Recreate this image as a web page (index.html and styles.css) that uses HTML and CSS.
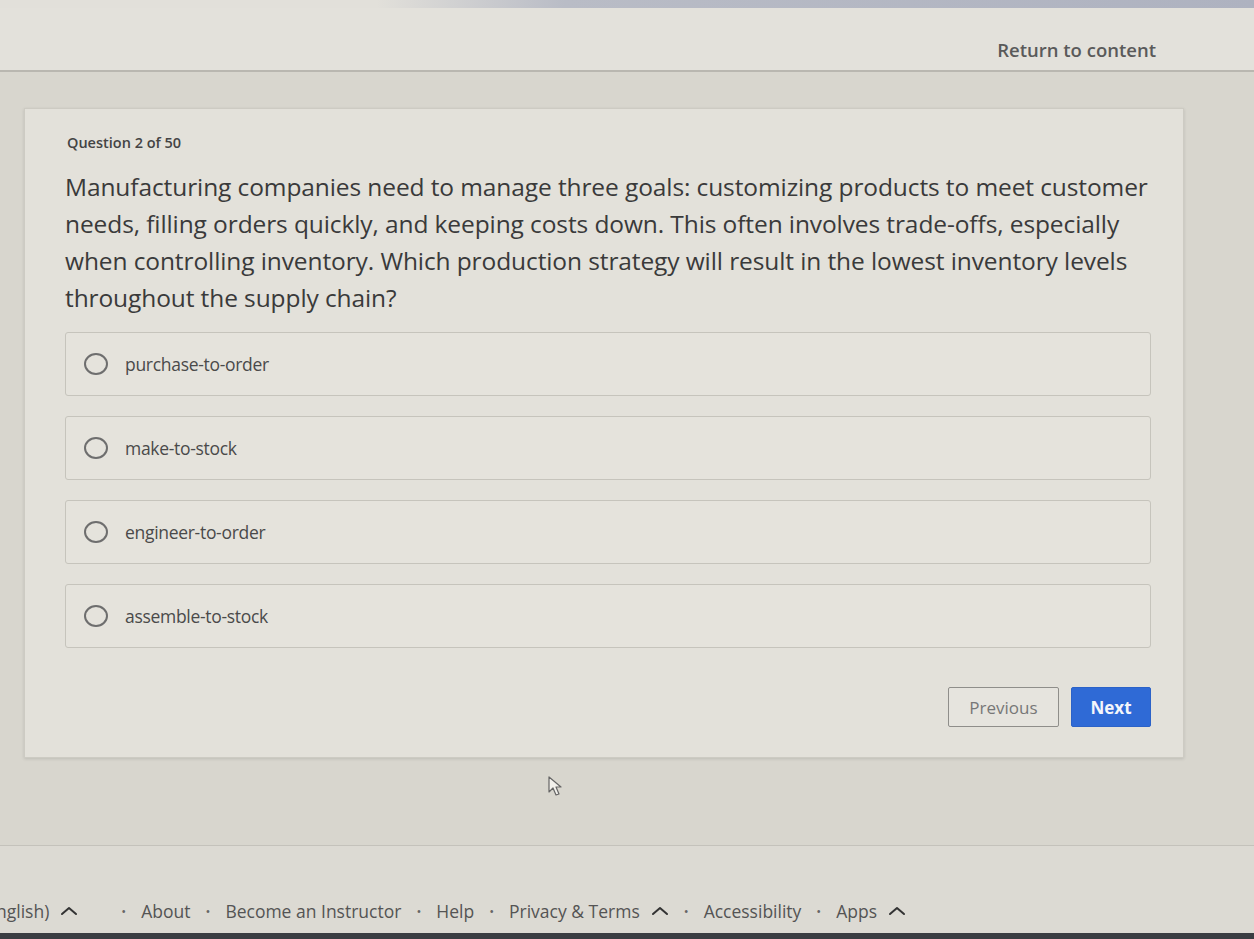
FILE: index.html
```html
<!DOCTYPE html>
<html lang="en">
<head>
<meta charset="utf-8">
<title>Question 2 of 50</title>
<link rel="stylesheet" href="styles.css">
</head>
<body>
<div class="topband"></div>
<header class="header">
  <a class="return" href="#">Return to content</a>
</header>
<main class="main">
  <section class="card">
    <div class="qnum">Question 2 of 50</div>
    <p class="qtext">Manufacturing companies need to manage three goals: customizing products to meet customer needs, filling orders quickly, and keeping costs down. This often involves trade-offs, especially when controlling inventory. Which production strategy will result in the lowest inventory levels throughout the supply chain?</p>
    <div class="options">
      <label class="option"><span class="radio"></span><span class="otext">purchase-to-order</span></label>
      <label class="option"><span class="radio"></span><span class="otext">make-to-stock</span></label>
      <label class="option"><span class="radio"></span><span class="otext">engineer-to-order</span></label>
      <label class="option"><span class="radio"></span><span class="otext">assemble-to-stock</span></label>
    </div>
    <div class="actions">
      <button class="btn prev">Previous</button>
      <button class="btn next">Next</button>
    </div>
  </section>
  <svg class="cursor" width="16" height="22" viewBox="0 0 16 22"><path d="M1 1 L1 16 L5 12 L8 19 L11 18 L8 11 L13 11 Z" fill="#f2f1ec" stroke="#666" stroke-width="1.2" stroke-linejoin="round"/></svg>
</main>
<footer class="footer">
  <span class="fitem first">nglish)<svg class="caret" width="18" height="10" viewBox="0 0 18 10"><path d="M2 8 L9 2 L16 8" fill="none" stroke="#333" stroke-width="2" stroke-linecap="round" stroke-linejoin="round"/></svg></span>
  <span class="dot">&bull;</span><span class="fitem">About</span>
  <span class="dot">&bull;</span><span class="fitem">Become an Instructor</span>
  <span class="dot">&bull;</span><span class="fitem">Help</span>
  <span class="dot">&bull;</span><span class="fitem">Privacy &amp; Terms<svg class="caret" width="18" height="10" viewBox="0 0 18 10"><path d="M2 8 L9 2 L16 8" fill="none" stroke="#333" stroke-width="2" stroke-linecap="round" stroke-linejoin="round"/></svg></span>
  <span class="dot">&bull;</span><span class="fitem">Accessibility</span>
  <span class="dot">&bull;</span><span class="fitem">Apps<svg class="caret" width="18" height="10" viewBox="0 0 18 10"><path d="M2 8 L9 2 L16 8" fill="none" stroke="#333" stroke-width="2" stroke-linecap="round" stroke-linejoin="round"/></svg></span>
</footer>
<div class="taskbar"></div>
</body>
</html>
```
FILE: styles.css
```css
* { box-sizing: border-box; }
html, body { margin: 0; padding: 0; }
body {
  width: 1254px;
  height: 939px;
  overflow: hidden;
  background: #d9d7cf;
  font-family: "Open Sans", "Noto Sans", sans-serif;
  color: #3c3c3c;
  display: flex;
  flex-direction: column;
}
.topband {
  height: 8px;
  background: linear-gradient(90deg, #e2e0da 0%, #e2e0da 30%, #b9bcc6 45%, #aeb2c0 100%);
  flex: none;
}
.header {
  height: 64px;
  flex: none;
  background: #e3e1db;
  border-bottom: 2px solid #b9b7b0;
  display: flex;
  justify-content: flex-end;
  align-items: center;
  padding-right: 98px;
}
.return {
  color: #5a5a5a;
  font-size: 18.5px;
  text-decoration: none;
  font-weight: 600;
  margin-top: 20px;
}
.main {
  flex: 1;
  background: #d8d6ce;
  padding: 36px 70px 0 24px;
  position: relative;
}
.card {
  background: #e3e1da;
  border: 1px solid #cdcbc3;
  box-shadow: 0 1px 3px rgba(0,0,0,0.12);
  padding: 18px 32px 26px 40px;
  height: 650px;
}
.qnum {
  font-size: 14.5px;
  font-weight: 600;
  color: #444;
  margin: 6px 0 16px 2px;
}
.qtext {
  margin: 0 0 16px 0;
  font-size: 24.5px;
  line-height: 37px;
  color: #3a3a3a;
  letter-spacing: -0.1px;
}
.options {
  display: flex;
  flex-direction: column;
  gap: 20px;
}
.option {
  display: flex;
  align-items: center;
  height: 64px;
  border: 1px solid #c6c4bc;
  border-radius: 3px;
  background: #e5e3dc;
  padding-left: 18px;
}
.radio {
  width: 24px;
  height: 22px;
  border: 2px solid #6e6e6e;
  border-radius: 50%;
  margin-right: 17px;
  flex: none;
}
.otext {
  font-size: 17.5px;
  color: #4a4a4a;
  letter-spacing: -0.3px;
}
.actions {
  display: flex;
  justify-content: flex-end;
  gap: 12px;
  margin-top: 39px;
}
.btn {
  font-family: "Open Sans", "Noto Sans", sans-serif;
  font-size: 17px;
  height: 40px;
  border-radius: 2px;
  cursor: pointer;
}
.prev {
  width: 111px;
  background: #e6e4de;
  color: #777;
  border: 1.5px solid #8f8e8a;
}
.next {
  width: 80px;
  background: #2f6ad6;
  color: #f4f6fb;
  border: 1px solid #2b62c8;
  font-weight: 700;
}
.cursor {
  position: absolute;
  left: 548px;
  top: 704px;
}
.footer {
  height: 88px;
  flex: none;
  background: #dcdad3;
  border-top: 1px solid #c4c2bb;
  display: flex;
  align-items: center;
  padding: 42px 0 0 0;
  font-size: 17.5px;
  color: #545454;
  margin-left: -4px;
}
.fitem { white-space: nowrap; display: inline-flex; align-items: center; }
.caret { margin-left: 11px; }
.dot { margin: 0 15px; font-size: 13px; color: #666; }
.footer .first { margin-right: 28px; }
.taskbar {
  height: 6px;
  flex: none;
  background: #3a3d42;
}
```
